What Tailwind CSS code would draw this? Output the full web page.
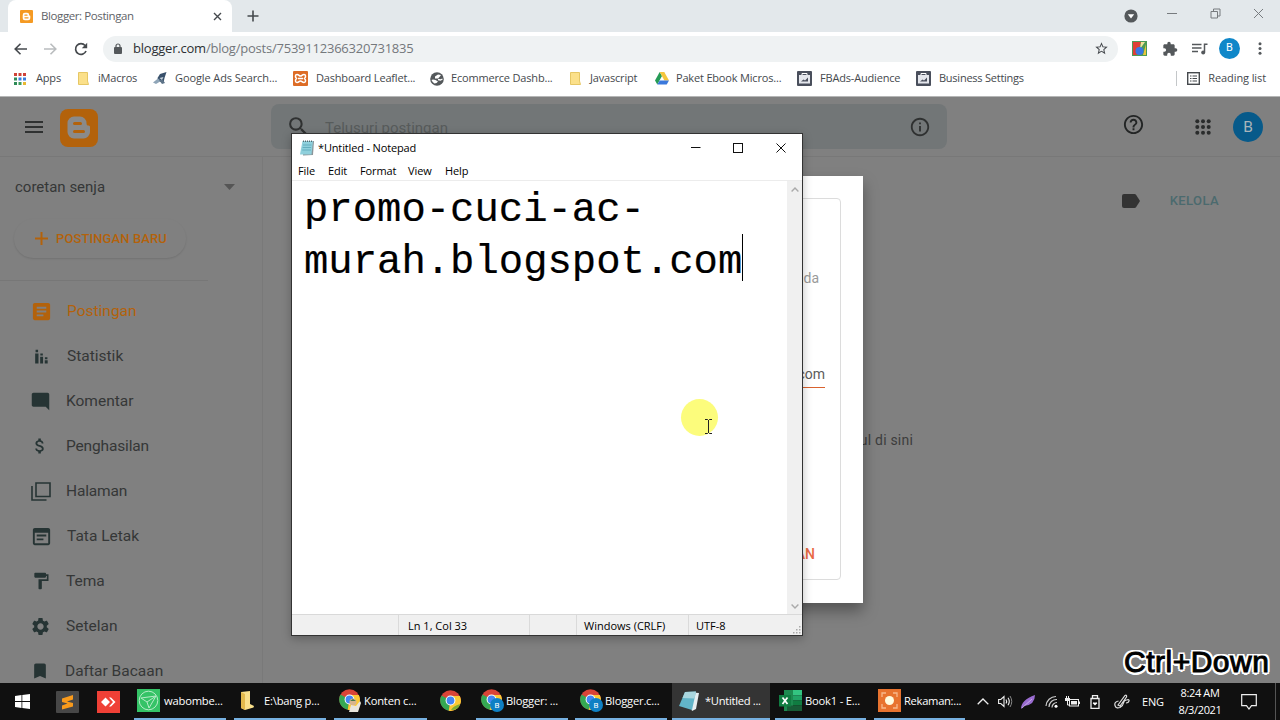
<!DOCTYPE html>
<html lang="id">
<head>
    <meta charset="UTF-8">
    <meta name="viewport" content="width=device-width, initial-scale=1.0">
    <title>Blogger: Postingan</title>
    <script src="https://cdn.jsdelivr.net/npm/@tailwindcss/browser@4"></script>
</head>
<body class="bg-[#808080]">
<div class="relative w-[1280px] h-[720px] overflow-hidden flex flex-col font-['Open_Sans',sans-serif] text-xs text-[#45494d]">

    <!-- Tab strip -->
    <div class="h-8 shrink-0 bg-[#e3e8eb] flex pl-2">
        <div class="w-[224px] h-full bg-white rounded-t-lg flex items-center pl-3">
            <svg class="w-[13px] h-[13px] shrink-0" viewBox="0 0 24 24"><rect width="24" height="24" rx="2" fill="#f59a23"/><path d="M9 5h4a4 4 0 0 1 4 4c0 1 .5 1.500 1.500 1.500S19 11 19 12v3a4 4 0 0 1-4 4H9a4 4 0 0 1-4-4V9a4 4 0 0 1 4-4z" fill="#fff"/><path d="M9 9.500h4M9 14.500h6" stroke="#f59a23" stroke-width="2" stroke-linecap="round"/></svg>
            <span class="ml-2 w-[172px] text-[11.5px] tracking-[-0.4px] text-[#5f6368]">Blogger: Postingan</span>
            <svg class="w-[9px] h-[9px] shrink-0" viewBox="0 0 9 9"><path d="M1 1l7 7M8 1L1 8" stroke="#45494d" stroke-width="1.400"/></svg>
        </div>
        <svg class="ml-[15px] mt-[10px] w-3 h-3" viewBox="0 0 12 12"><path d="M6 .5v11M.5 6h11" stroke="#45494d" stroke-width="1.600"/></svg>
        <div class="ml-auto flex">
            <svg class="mt-[9px] mr-[29px] w-[14px] h-[14px]" viewBox="0 0 14 14"><circle cx="7" cy="7" r="6.600" fill="#54585b"/><path d="M3.800 5.200h6.400L7 9.500z" fill="#fff"/></svg>
            <svg class="mt-[9px] mr-[33px] w-[10px] h-[10px]" viewBox="0 0 10 10"><path d="M0 4.500h10" stroke="#777b7e"/></svg>
            <svg class="mt-2 mr-[32px] w-[11px] h-[11px]" viewBox="0 0 11 11"><path d="M1 3.500h6.500V10H1zM3.500 3.500V1H10v7H7.500" fill="none" stroke="#777b7e"/></svg>
            <svg class="mt-2 mr-4 w-[11px] h-[11px]" viewBox="0 0 11 11"><path d="M1 1l9 9M10 1l-9 9" stroke="#777b7e"/></svg>
        </div>
    </div>

    <!-- Address bar -->
    <div class="h-[33px] shrink-0 bg-white flex items-center">
        <svg class="ml-[14px] w-[13px] h-3" viewBox="0 0 13 12"><path d="M13 6H1.500M6.500 .8L1.200 6l5.300 5.200" fill="none" stroke="#45494d" stroke-width="1.600"/></svg>
        <svg class="ml-[17px] w-[13px] h-3" viewBox="0 0 13 12"><path d="M0 6h11.500M6.500 .8L11.800 6l-5.300 5.200" fill="none" stroke="#b9bcbe" stroke-width="1.600"/></svg>
        <svg class="ml-[17px] w-[14px] h-[14px]" viewBox="0 0 14 14"><path d="M12 9a5.400 5.400 0 1 1-.9-5.500" fill="none" stroke="#45494d" stroke-width="1.700"/><path d="M13.200 .8v5.400H7.800z" fill="#45494d"/></svg>
        <div class="ml-[15px] w-[1015px] h-[26px] rounded-full bg-[#eff2f3] flex items-center">
            <svg class="ml-[11px] w-2 h-[11px]" viewBox="0 0 8 11"><path d="M2 5V3a2 2 0 0 1 4 0v2" fill="none" stroke="#54585b" stroke-width="1.200"/><rect y="4" width="8" height="7" rx="1" fill="#54585b"/></svg>
            <span class="ml-[11px] text-[13px] tracking-[-0.22px] text-[#74787c]"><span class="text-[#2d3033]">blogger.com</span>/blog/posts/7539112366320731835</span>
            <svg class="ml-auto mr-[9px] w-[15px] h-[15px]" viewBox="0 0 24 24"><path fill="#45494d" d="M22 9.240l-7.190-.62L12 2 9.190 8.630 2 9.240l5.460 4.730L5.820 21 12 17.270 18.180 21l-1.630-7.030L22 9.240zM12 15.400l-3.760 2.270 1-4.280-3.320-2.880 4.380-.38L12 6.100l1.710 4.040 4.380.38-3.320 2.880 1 4.280L12 15.400z"/></svg>
        </div>
        <svg class="ml-[14px] w-[15px] h-[15px]" viewBox="0 0 15 15"><path fill="#4c9a56" d="M0 0h15v15H0z"/><path fill="#df3e35" d="M1 1h8L5 14H1z"/><path fill="#efe39a" d="M9 1h4L8 8z"/><path fill="#e8c63c" d="M14 3v11h-3z"/><circle cx="7.500" cy="10" r="4" fill="#3a76e3"/></svg>
        <svg class="ml-[15px] w-[16px] h-[16px]" viewBox="0 0 24 24"><path fill="#54585b" d="M20.500 11H19V7c0-1.100-.9-2-2-2h-4V3.500a2.500 2.500 0 0 0-5 0V5H4c-1.100 0-2 .9-2 2v3.800h1.500a2.700 2.700 0 0 1 0 5.400H2V20c0 1.100.9 2 2 2h3.800v-1.500a2.700 2.700 0 0 1 5.400 0V22H17c1.100 0 2-.9 2-2v-4h1.500a2.500 2.500 0 0 0 0-5z"/></svg>
        <svg class="ml-[14px] w-[16px] h-3" viewBox="0 0 16 12"><path d="M0 1.500h9.500M0 5h9.500M0 8.500h6" stroke="#54585b" stroke-width="1.500"/><path d="M15.500 1.200h-3V9" fill="none" stroke="#54585b" stroke-width="1.500"/><circle cx="11.200" cy="9.400" r="2" fill="#54585b"/></svg>
        <div class="ml-[11px] w-[21px] h-[21px] rounded-full bg-[#0f87c9] text-white text-[11px] font-['Roboto',sans-serif] flex items-center justify-center">B</div>
        <svg class="ml-[18px] w-1 h-[13px]" viewBox="0 0 4 13"><g fill="#54585b"><circle cx="2" cy="1.800" r="1.500"/><circle cx="2" cy="6.500" r="1.500"/><circle cx="2" cy="11.200" r="1.500"/></g></svg>
    </div>

    <!-- Bookmarks -->
    <div class="h-8 shrink-0 bg-white border-b border-[#b5b6b6] pb-1 flex items-center pl-[14px] text-[11px] tracking-[-0.18px] whitespace-nowrap">
        <div class="w-16 flex items-center">
            <svg class="mr-[10px] w-3 h-3" viewBox="0 0 12 12"><path fill="#cf4238" d="M0 0h3v3H0zM4.500 0h3v3h-3zM9 0h3v3H9z"/><path fill="#2e8b57" d="M0 4.500h3v3H0zM0 9h3v3H0z"/><path fill="#3b7ddd" d="M4.500 4.500h3v3h-3zM9 4.500h3v3H9z"/><path fill="#3b9a5a" d="M4.500 9h3v3h-3z"/><path fill="#e8b832" d="M9 9h3v3H9z"/></svg>
            <span>Apps</span>
        </div>
        <div class="w-[75px] flex items-center">
            <svg class="mr-[9px] w-[11px] h-[13px]" viewBox="0 0 11 13"><path fill="#fbe08a" stroke="#e6c765" d="M.5 .5h9v8.500l1 3.500H.5z"/></svg>
            <span>iMacros</span>
        </div>
        <div class="w-[140px] flex items-center">
            <svg class="mr-2 w-[14px] h-[13px]" viewBox="0 0 14 13"><path d="M13.500 0L7 2 4.500 6l1 3 5 2 1-5z" fill="#38506b"/><path d="M0 10.500l5-4 3 2.500-5 3z" fill="#8fa5b8"/><path d="M6 8l3 4 3-1-2-3z" fill="#5d7388"/><path d="M6.500 6l4-1-1.500 3z" fill="#c8d4de"/></svg>
            <span class="tracking-[-0.1px]">Google Ads Search...</span>
        </div>
        <div class="w-[137px] flex items-center">
            <svg class="mr-2 w-[15px] h-[15px]" viewBox="0 0 15 15"><rect width="15" height="15" rx="1" fill="#dd6c26"/><path d="M4 3.500c2 0 2 1.500 3.500 1.500S9 3.500 11 3.500s2 2.500.5 4c1.500 1.500 1.500 4-.5 4S9 10 7.500 10 6 11.500 4 11.500s-2-2.500-.5-4C2 6 2 3.500 4 3.500z" fill="none" stroke="#fff" stroke-width="1.500"/><path d="M5 7.500h5" stroke="#fff" stroke-width="1.500"/></svg>
            <span>Dashboard Leaflet...</span>
        </div>
        <div class="w-[140px] flex items-center">
            <svg class="mr-[7px] w-[14px] h-[14px]" viewBox="0 0 14 14"><circle cx="7" cy="7" r="6.800" fill="#54585b"/><path d="M1.500 8q1 2.500 3 3.500l2-.5L8 9.500 5.500 8 3 7.500zM5 4.500L8 2.500l3 .5-1.500 2L8 6.500H5z" fill="#fff"/><path d="M8 7.500l2.500.5 2-1" stroke="#fff" stroke-width="1.300" fill="none"/></svg>
            <span>Ecommerce Dashb...</span>
        </div>
        <div class="w-[85px] flex items-center">
            <svg class="mr-[9px] w-[11px] h-[13px]" viewBox="0 0 11 13"><path fill="#fbe08a" stroke="#e6c765" d="M.5 .5h9v8.500l1 3.500H.5z"/></svg>
            <span>Javascript</span>
        </div>
        <div class="w-[142px] flex items-center">
            <svg class="mr-[7px] w-[14px] h-[13px]" viewBox="0 0 14 13"><path fill="#259b56" d="M4.700 0L0 8.500 2.300 12.500 7 4z"/><path fill="#f4c63d" d="M4.700 0h4.600L14 8.500H9.400z"/><path fill="#3b78dc" d="M4.700 8.500H14l-2.300 4H2.300z"/></svg>
            <span>Paket Ebook Micros...</span>
        </div>
        <div class="w-[119px] flex items-center">
            <svg class="mr-2 w-[15px] h-[15px]" viewBox="0 0 15 15"><rect width="15" height="15" rx="1" fill="#4a4f5c"/><path d="M5 4V2.500h5V4" fill="none" stroke="#fff"/><rect x="2" y="4" width="11" height="8.500" fill="#e4e6ec"/><path d="M4 10.500l2.500-2 1.500 1 3-3v4z" fill="#4a4f5c"/></svg>
            <span>FBAds-Audience</span>
        </div>
        <div class="flex items-center">
            <svg class="mr-2 w-[15px] h-[15px]" viewBox="0 0 15 15"><rect width="15" height="15" rx="1" fill="#4a4f5c"/><path d="M5 4V2.500h5V4" fill="none" stroke="#fff"/><rect x="2" y="4" width="11" height="8.500" fill="#e4e6ec"/><path d="M4 10.500l2.500-2 1.500 1 3-3v4z" fill="#4a4f5c"/></svg>
            <span class="tracking-[-0.24px]">Business Settings</span>
        </div>
        <div class="ml-auto mr-[14px] flex items-center border-l border-[#c4c7c9] pl-[10px]">
            <svg class="mr-2 w-[13px] h-[13px]" viewBox="0 0 13 13"><rect x=".7" y=".7" width="11.600" height="11.600" fill="none" stroke="#45494d" stroke-width="1.400"/><path d="M3 4h1.500M3 6.500h1.500M3 9h1.500M5.500 4H10M5.500 6.500H10M5.500 9H10" stroke="#45494d" stroke-width="1.200"/></svg>
            <span class="tracking-[-0.1px]">Reading list</span>
        </div>
    </div>

    <!-- Blogger page, dimmed by the open dialog -->
    <div class="h-[586px] shrink-0 bg-[#808080] flex flex-col font-['Roboto',sans-serif] text-[15.5px] leading-6 text-[#353737]">
        <div class="h-[60px] shrink-0 border-b border-[#787878] flex items-center">
            <svg class="ml-[25px] w-[18px] h-[12px]" viewBox="0 0 18 12"><path d="M0 1h18M0 6h18M0 11h18" stroke="#2f3131" stroke-width="1.800"/></svg>
            <svg class="ml-[17px] mt-[3px] w-[38px] h-[38px]" viewBox="0 0 38 38"><rect width="38" height="38" rx="8" fill="#b3620b"/><path d="M14 7.500h6a6.500 6.500 0 0 1 6.500 6.500c0 2 .6 2.500 2 2.600 1.200.1 1.500.7 1.500 1.700V23a6.500 6.500 0 0 1-6.500 6.500H14A6.500 6.500 0 0 1 7.500 23v-9A6.500 6.500 0 0 1 14 7.500z" fill="#8a8a8a"/><path d="M14.500 14.500h6M14.500 22.500h9" stroke="#b3620b" stroke-width="3" stroke-linecap="round"/></svg>
            <div class="ml-[173px] w-[676px] h-[45px] rounded-lg bg-[#727677] flex items-center">
                <svg class="ml-[15px] w-[25px] h-[25px]" viewBox="0 0 24 24"><path fill="#2f3131" d="M15.500 14h-.79l-.28-.27A6.471 6.471 0 0 0 16 9.500 6.500 6.500 0 1 0 9.500 16c1.610 0 3.090-.59 4.230-1.570l.27.280v.79l5 4.990L20.490 19l-4.990-5zm-6 0C7.010 14 5 11.990 5 9.500S7.010 5 9.500 5 14 7.010 14 9.500 11.990 14 9.500 14z"/></svg>
                <span class="ml-[14px] mt-0.5 text-[15px] text-[#575b5b]">Telusuri postingan</span>
                <svg class="ml-auto mr-4 w-[22px] h-[22px]" viewBox="0 0 24 24"><path fill="#2f3131" d="M11 7h2v2h-2zm0 4h2v6h-2zm1-9C6.480 2 2 6.480 2 12s4.480 10 10 10 10-4.480 10-10S17.520 2 12 2zm0 18c-4.410 0-8-3.590-8-8s3.590-8 8-8 8 3.590 8 8-3.590 8-8 8z"/></svg>
            </div>
            <svg class="ml-[175px] mb-1 w-[23px] h-[23px]" viewBox="0 0 24 24"><path fill="#232525" d="M11 18h2v-2h-2v2zm1-16C6.480 2 2 6.480 2 12s4.480 10 10 10 10-4.480 10-10S17.520 2 12 2zm0 18c-4.410 0-8-3.590-8-8s3.590-8 8-8 8 3.590 8 8-3.590 8-8 8zm0-14c-2.210 0-4 1.790-4 4h2c0-1.100.9-2 2-2s2 .9 2 2c0 2-3 1.750-3 5h2c0-2.250 3-2.500 3-5 0-2.210-1.790-4-4-4z"/></svg>
            <svg class="ml-[50px] w-4 h-4" viewBox="0 0 16 16"><g fill="#2a2c2c"><circle cx="2.300" cy="2.300" r="2"/><circle cx="8" cy="2.300" r="2"/><circle cx="13.700" cy="2.300" r="2"/><circle cx="2.300" cy="8" r="2"/><circle cx="8" cy="8" r="2"/><circle cx="13.700" cy="8" r="2"/><circle cx="2.300" cy="13.700" r="2"/><circle cx="8" cy="13.700" r="2"/><circle cx="13.700" cy="13.700" r="2"/></g></svg>
            <div class="ml-[22px] w-[30px] h-[30px] rounded-full bg-[#075a8a] text-[#a9b4ba] flex items-center justify-center">B</div>
        </div>

        <div class="flex-1 flex overflow-hidden">
            <!-- Sidebar -->
            <div class="w-[263px] shrink-0 border-r border-[#797979] flex flex-col">
                <div class="h-[58px] shrink-0 flex items-center justify-between pl-[15px] pr-7">
                    <span class="text-[15px] mt-0.5">coretan senja</span>
                    <svg class="w-[11px] h-[6px] -mr-px mt-px" viewBox="0 0 11 6"><path d="M0 0h11L5.500 6z" fill="#555"/></svg>
                </div>
                <div class="ml-[14px] mt-1 w-[172px] h-[39px] shrink-0 rounded-full shadow-[0_1px_2px_rgba(0,0,0,0.12)] flex items-center pl-[21px] text-[#b3620b] text-[13px] font-medium">
                    <svg class="w-[13px] h-[13px] mr-[8px]" viewBox="0 0 13 13"><path d="M6.500 0v13M0 6.500h13" stroke="#b3620b" stroke-width="2"/></svg>
                    <span class="tracking-[0.1px]">POSTINGAN BARU</span>
                </div>
                <div class="mt-[22px] w-[208px] border-b border-[#777]"></div>
                <div class="mt-[7px] flex flex-col [&>div]:h-[45px] [&>div]:shrink-0 [&>div]:flex [&>div]:items-center [&>div]:pl-[30px] [&>div]:pt-px">
                    <div class="text-[#b3620b]">
                        <svg class="w-[23px] h-[23px] mr-[14px]" viewBox="0 0 24 24"><path fill="#b3620b" d="M19 3H5c-1.100 0-2 .9-2 2v14c0 1.100.9 2 2 2h14c1.100 0 2-.9 2-2V5c0-1.100-.9-2-2-2zm-5 14H7v-2h7v2zm3-4H7v-2h10v2zm0-4H7V7h10v2z"/></svg>Postingan
                    </div>
                    <div>
                        <svg class="w-[20px] h-[20px] mr-[16px] ml-px" viewBox="0 0 24 24"><path fill="#263434" d="M5 9h4v12H5zM5.500 4.500h3v3h-3zM11 13h3.500v8H11zM11.200 9h3v2.500h-3zM16.500 17H20v4h-3.500zM16.700 13.500h3V16h-3z"/></svg>Statistik
                    </div>
                    <div>
                        <svg class="w-[21px] h-[21px] mr-[15px]" viewBox="0 0 24 24"><path fill="#263434" d="M21.990 4c0-1.100-.89-2-1.990-2H4c-1.100 0-2 .9-2 2v12c0 1.100.9 2 2 2h14l4 4-.01-18z"/></svg>Komentar
                    </div>
                    <div>
                        <svg class="w-[20px] h-[20px] mr-[16px]" viewBox="0 0 24 24"><path fill="#263434" d="M11.800 10.900c-2.270-.59-3-1.200-3-2.150 0-1.090 1.010-1.850 2.700-1.850 1.780 0 2.440.85 2.500 2.100h2.210c-.07-1.720-1.120-3.300-3.210-3.810V3h-3v2.160c-1.940.42-3.500 1.680-3.500 3.610 0 2.310 1.910 3.460 4.700 4.130 2.500.6 3 1.480 3 2.410 0 .69-.49 1.790-2.700 1.790-2.060 0-2.870-.92-2.980-2.100h-2.200c.12 2.190 1.760 3.420 3.680 3.830V21h3v-2.150c1.950-.37 3.500-1.500 3.500-3.550 0-2.840-2.430-3.810-4.700-4.400z"/></svg><span class="tracking-[-0.15px]">Penghasilan</span>
                    </div>
                    <div>
                        <svg class="w-[20px] h-[19px] mr-[15px] ml-px" viewBox="0 0 20 19"><path d="M5 1h14v13.500H5zM1 4v14h14.500" fill="none" stroke="#263434" stroke-width="1.600"/></svg><span class="tracking-[-0.15px]">Halaman</span>
                    </div>
                    <div>
                        <svg class="w-[23px] h-[23px] mr-[14px]" viewBox="0 0 24 24"><path fill="#263434" d="M19 3H5c-1.100 0-2 .9-2 2v14c0 1.100.9 2 2 2h14c1.100 0 2-.9 2-2V5c0-1.100-.9-2-2-2zm0 16H5V8h14v11zM7 10h10v2H7zm0 4h7v2H7z"/></svg>Tata Letak
                    </div>
                    <div>
                        <svg class="w-[20px] h-[20px] mr-[15px] ml-px" viewBox="0 0 24 24"><path fill="#263434" d="M18 4V3c0-.55-.45-1-1-1H5c-.55 0-1 .45-1 1v4c0 .55.45 1 1 1h12c.55 0 1-.45 1-1V6h1v4H9v11c0 .55.45 1 1 1h2c.55 0 1-.45 1-1v-9h8V4h-3z"/></svg>Tema
                    </div>
                    <div>
                        <svg class="w-[21px] h-[21px] mr-[15px]" viewBox="0 0 24 24"><path fill="#263434" d="M19.140 12.940c.04-.3.06-.61.06-.94 0-.32-.02-.64-.07-.94l2.030-1.580c.18-.14.23-.41.12-.61l-1.920-3.320c-.12-.22-.37-.29-.59-.22l-2.390.96c-.5-.38-1.030-.7-1.620-.94l-.36-2.540c-.04-.24-.24-.41-.48-.41h-3.840c-.24 0-.43.17-.47.41l-.36 2.540c-.59.24-1.130.57-1.620.94l-2.390-.96c-.22-.08-.47 0-.59.22L2.740 8.870c-.12.21-.08.47.12.61l2.030 1.580c-.05.3-.09.63-.09.94s.02.64.07.94l-2.030 1.580c-.18.14-.23.41-.12.61l1.920 3.320c.12.22.37.29.59.22l2.390-.96c.5.38 1.030.7 1.620.94l.36 2.540c.05.24.24.41.48.41h3.840c.24 0 .44-.17.47-.41l.36-2.540c.59-.24 1.130-.56 1.620-.94l2.390.96c.22.08.47 0 .59-.22l1.920-3.320c.12-.22.07-.47-.12-.61l-2.010-1.580zM12 15.600c-1.980 0-3.600-1.620-3.600-3.600s1.620-3.600 3.600-3.600 3.600 1.620 3.600 3.600-1.620 3.600-3.600 3.600z"/></svg>Setelan
                    </div>
                    <div>
                        <svg class="w-[20px] h-[20px] mr-[15px]" viewBox="0 0 24 24"><path fill="#263434" d="M17 3H7c-1.100 0-1.990.9-1.990 2L5 21l7-3 7 3V5c0-1.100-.9-2-2-2z"/></svg>Daftar Bacaan
                    </div>
                </div>
            </div>

            <!-- Post list -->
            <div class="flex-1 flex flex-col">
                <div class="h-[88px] flex items-center justify-end pr-[61px]">
                    <svg class="w-[18px] h-[14px] mr-[30px]" viewBox="0 0 18 14"><path d="M2 0h10.500q1 0 1.700 1L18 7l-3.800 6q-.7 1-1.700 1H2q-2 0-2-2V2q0-2 2-2z" fill="#333"/></svg>
                    <span class="text-[13px] font-medium tracking-[0.4px] text-[#4b6a6e]">KELOLA</span>
                </div>
                <p class="mt-[184px] pr-[367px] text-right text-sm leading-[22px] text-[#3d3d3d] tracking-[0.2px]">ul di sini</p>
            </div>
        </div>
    </div>

    <!-- Taskbar -->
    <div class="h-[37px] shrink-0 bg-[#101010] text-[11.2px] leading-[18px] text-white flex items-stretch whitespace-nowrap tracking-[-0.2px]">
        <div class="w-[134px] flex items-center shrink-0">
            <svg class="ml-[15px] w-[15px] h-[15px]" viewBox="0 0 15 15"><path fill="#fff" d="M0 2l6.500-.9v6H0zM7.300 1L15 0v7.100H7.300zM0 7.900h6.500v6L0 13zM7.300 7.900H15V15l-7.700-1z"/></svg>
            <svg class="ml-[26px] w-[23px] h-[22px]" viewBox="0 0 23 22"><rect width="23" height="22" rx="1" fill="#474747"/><path d="M17 4v4.500L11 10.500l6 1.500v3.500L6 18.500V14.500l5.500-2L6 11V7.500z" fill="#f89a1c"/></svg>
            <svg class="ml-[18px] w-[23px] h-[22px]" viewBox="0 0 23 22"><rect width="23" height="22" fill="#ef4036"/><path fill="#fff" d="M8.500 6.500L13 11l-4.500 4.500L4 11zM12 6.500h2L18.500 11 14 15.500h-2l4-4.500z"/></svg>
        </div>
        <div class="w-[92px] mr-2 shrink-0 border-b-2 border-[#76b0e0] flex items-center pl-[3px]">
            <svg class="mr-1 w-[23px] h-[23px]" viewBox="0 0 23 23"><rect width="23" height="23" fill="#35c367"/><circle cx="11.500" cy="11.500" r="9.300" fill="none" stroke="#b5ecc8"/><path d="M4 9l15-2-7 12-2-6zM10 13l9-6" fill="none" stroke="#b5ecc8"/></svg>
            <span>wabombe...</span>
        </div>
        <div class="w-[92px] mr-2 shrink-0 border-b-2 border-[#76b0e0] flex items-center pl-[7px]">
            <svg class="mr-[10px] w-[13px] h-[19px]" viewBox="0 0 13 19"><path fill="#fae08b" d="M0 1l9-1v13l4 2-.5 1.500L4 19l-4-2z"/><path fill="#e3b94c" d="M0 1l4 2v16l-4-2z"/></svg>
            <span>E:\bang p...</span>
        </div>
        <div class="w-[93px] mr-[13px] shrink-0 border-b-2 border-[#76b0e0] flex items-center pl-[5px]">
            <svg class="mr-[2px] w-[23px] h-[23px]" viewBox="0 0 23 23"><use href="#chrome"/><circle cx="14" cy="13" r="3.500" fill="#d8b48c"/><path d="M10 23l2-7 5 1 4-5 1 2-3 9z" fill="#e9e5dc"/><path d="M11 12l3-2 3 2z" fill="#3f7a48"/></svg>
            <span>Konten c...</span>
        </div>
        <div class="w-[36px] shrink-0 flex items-center">
            <svg class="w-[23px] h-[23px]" viewBox="0 0 23 23">
                <g id="chrome"><circle cx="10.500" cy="10.500" r="10.300" fill="#da4437"/><path d="M10.500 10.500L1.500 5.400a10.300 10.300 0 0 0 7.500 15.300z" fill="#35a853"/><path d="M10.500 10.500L8.700 20.700A10.300 10.300 0 0 0 19.800 6h-9.300z" fill="#fbc934"/><circle cx="10.500" cy="10.500" r="4.900" fill="#fff"/><circle cx="10.500" cy="10.500" r="3.900" fill="#4486f3"/></g>
                <path d="M11 20q2-4 9-6-1 6-9 6z" fill="#7fae33"/>
            </svg>
        </div>
        <div class="w-[92px] mr-[7px] shrink-0 border-b-2 border-[#76b0e0] flex items-center pl-[5px]">
            <svg class="mr-[2px] w-[23px] h-[23px]" viewBox="0 0 23 23"><use href="#chrome"/><circle cx="16" cy="16" r="7" fill="#0f80c4"/><text x="16" y="19" text-anchor="middle" font-family="Roboto" font-size="8" fill="#fff">B</text></svg>
            <span>Blogger: ...</span>
        </div>
        <div class="w-[92px] mr-[5px] shrink-0 border-b-2 border-[#76b0e0] flex items-center pl-[5px]">
            <svg class="mr-[2px] w-[23px] h-[23px]" viewBox="0 0 23 23"><use href="#chrome"/><circle cx="16" cy="16" r="7" fill="#0f80c4"/><text x="16" y="19" text-anchor="middle" font-family="Roboto" font-size="8" fill="#fff">B</text></svg>
            <span>Blogger.c...</span>
        </div>
        <div class="w-[98px] mr-[5px] shrink-0 border-b-2 border-[#76b0e0] bg-[#343434] flex items-center pl-[7px]">
            <svg class="mr-[5px] w-[21px] h-[20px]" viewBox="0 0 21 20"><path d="M7 1l13 1-3 16-4 2z" fill="#e7eef0"/><path d="M6 1l11-.5L13 19 0 15z" fill="#62b4c8"/><path d="M6 1l11-.5-1.500 7L3.500 7z" fill="#a9d6de"/></svg>
            <span class="tracking-[-0.3px]">*Untitled ...</span>
        </div>
        <div class="w-[91px] mr-2 shrink-0 border-b-2 border-[#76b0e0] flex items-center pl-1">
            <svg class="mr-[3px] w-[23px] h-[21px]" viewBox="0 0 23 21"><path fill="#1d8a50" d="M5 0h9v21H5z"/><path fill="#33c481" d="M14 0h9v5.500h-9z"/><path fill="#21a366" d="M14 5.500h9v5h-9z"/><path fill="#107c41" d="M14 10.500h9v5h-9z"/><path fill="#185c37" d="M8 15.500h15V21H8z"/><rect y="5" width="12" height="11.500" fill="#107c41"/><path d="M3.500 7.500l5 6.500M8.500 7.500l-5 6.500" stroke="#fff" stroke-width="1.700"/></svg>
            <span>Book1 - E...</span>
        </div>
        <div class="w-[91px] shrink-0 border-b-2 border-[#76b0e0] flex items-center pl-1">
            <svg class="mr-[3px] w-[23px] h-[23px]" viewBox="0 0 23 23"><rect width="23" height="23" fill="#e8732f"/><circle cx="11.500" cy="11.500" r="4.500" fill="#fffbe0"/><path d="M4 8V4h4M15 4h4v4M19 15v4h-4M8 19H4v-4" fill="none" stroke="#f7b98c" stroke-width="1.300"/></svg>
            <span class="tracking-[-0.3px]">Rekaman:...</span>
        </div>

        <!-- Tray -->
        <div class="flex items-center ml-3">
            <svg class="w-[12px] h-[7px]" viewBox="0 0 12 7"><path d="M.7 6.300L6 1l5.300 5.300" fill="none" stroke="#eee" stroke-width="1.300"/></svg>
            <svg class="ml-[9px] w-[15px] h-[13px]" viewBox="0 0 15 13"><path d="M.6 4.500h2.200L6 1.500v10l-3.200-3H.6zM8 4.500q1.300 2 0 4M10 2.800q2.500 3.700 0 7.400" fill="none" stroke="#eee" stroke-width="1.100"/><path d="M12 1q3.500 5.500 0 11" fill="none" stroke="#888"/></svg>
            <svg class="ml-2 w-[14px] h-[14px]" viewBox="0 0 14 14"><path d="M0 14Q0 5 14 0q0 10-11 11z" fill="#9a6cd0"/><path d="M1 13L11 4" stroke="#d6bdf0" stroke-width=".8"/></svg>
            <svg class="ml-[10px] w-[14px] h-[13px]" viewBox="0 0 14 13"><path d="M1 11A10 10 0 0 1 11 1.500M4 12a7.500 7.500 0 0 1 8-7.500M7 12.500A5 5 0 0 1 12 7.500" fill="none" stroke="#ccc" stroke-width="1.200"/><circle cx="11" cy="11.300" r="1.500" fill="#fff"/></svg>
            <svg class="ml-[6px] w-[15px] h-[12px]" viewBox="0 0 15 12"><rect x="4.500" y="3.500" width="9" height="6.500" fill="none" stroke="#eee"/><path d="M6 5h6v3.500H6zM14 5.500h1V8h-1zM0 2h5v3H0z" fill="#eee"/><path d="M1.500 0v2M3.500 0v2M2.500 5v4h2" fill="none" stroke="#eee"/></svg>
            <svg class="ml-[10px] w-[10px] h-[14px]" viewBox="0 0 10 14"><path d="M1 3.500h8v9.800H1zM2.500 3V.7h5V3" fill="none" stroke="#eee" stroke-width="1.300"/><path d="M5 10.500L2.700 8.200q.8-1.700 2.300-.5 1.500-1.200 2.300.5z" fill="#fff"/></svg>
            <svg class="ml-[14px] w-4 h-[15px]" viewBox="0 0 16 15"><path d="M4 11L11 1.500q2-1 1.500 1.500L6 12zM4.500 7Q0 8 1 11.500T6 13.500q3-1.500 3.500-4.500t3-3q3-1 2.500 1t-3 2" fill="none" stroke="#ddd" stroke-width="1.200"/></svg>
            <span class="ml-3 w-[23px] text-[11px] tracking-[-0.2px]">ENG</span>
            <div class="ml-[8px] w-[54px] text-center text-[11px] leading-[16.5px] tracking-[-0.35px]">8:24 AM<br>8/3/2021</div>
            <svg class="ml-[14px] w-4 h-4" viewBox="0 0 16 16"><path d="M.7 .7h14.600v11H10.500L8 15l-2.500-3.300H.7z" fill="none" stroke="#eee" stroke-width="1.200"/></svg>
        </div>
        <div class="ml-auto mr-1 border-l border-[#555]"></div>
    </div>

    <!-- Dialog behind Notepad -->
    <div class="absolute left-[417px] top-[176px] w-[446px] h-[427px] bg-white p-[22px] font-['Roboto',sans-serif] text-sm text-right shadow-[0_8px_14px_rgba(0,0,0,0.35)]">
        <div class="h-[382px] border border-[#dcdcdc] rounded-[4px] flex flex-col">
            <p class="mt-[69px] mr-[21px] text-[#9a9a9a]">nda</p>
            <p class="mt-[73px] mr-[15px] pb-[3px] pt-[3px] border-b border-[#d9622f] text-[#5c5c5c]">com</p>
            <p class="mt-[156px] mr-[25px] font-medium text-[#ea6a45]">AN</p>
        </div>
    </div>

    <!-- Notepad window -->
    <div class="absolute left-[291px] top-[133px] w-[512px] h-[503px] bg-white border border-[#333] flex flex-col text-black text-[11px] shadow-[0_3px_9px_rgba(0,0,0,0.25)]">
        <div class="h-7 shrink-0 flex items-center pl-2">
            <svg class="w-[14px] h-4" viewBox="0 0 14 16"><path d="M3 1h11l-1 14-10 .5z" fill="#8b9599"/><path d="M2.500 1H13l-1.500 13.500H0z" fill="#8fd0dc"/><path d="M3 5h8.500M2.600 7.500h8.500M2.300 10H11" stroke="#5aa6b8" stroke-width=".8"/><path d="M3 1.300h10" stroke="#55686e" stroke-width="1.500" stroke-dasharray="1 1"/></svg>
            <span class="ml-1 tracking-[-0.15px]">*Untitled - Notepad</span>
            <svg class="ml-auto w-[10px] h-[10px]" viewBox="0 0 10 10"><path d="M0 4.500h9.500" stroke="#111"/></svg>
            <svg class="ml-8 mb-px w-[10px] h-[10px]" viewBox="0 0 10 10"><rect x=".5" y=".5" width="9" height="9" fill="none" stroke="#111"/></svg>
            <svg class="ml-[33px] mr-4 mb-px w-[10px] h-[10px]" viewBox="0 0 10 10"><path d="M.5 .5l9 9M9.500 .5l-9 9" stroke="#111"/></svg>
        </div>
        <div class="h-[19px] shrink-0 border-b border-[#ececec] flex items-center pl-[6px] pt-px text-[11px] tracking-[-0.1px]">
            <span class="w-[30px]">File</span>
            <span class="w-8">Edit</span>
            <span class="w-12">Format</span>
            <span class="w-[37px]">View</span>
            <span>Help</span>
        </div>
        <div class="flex-1 flex">
            <div class="flex-1 pl-3 pt-[3px] font-['Liberation_Mono',monospace] text-[40.6px] leading-[52px] [-webkit-text-stroke:0.2px_black]">
                promo-cuci-ac-<br>
                <span class="flex items-start h-[52px]">murah.blogspot.com<span class="w-px h-[47px] -mt-[2px] bg-black"></span></span>
            </div>
            <div class="w-[15px] bg-[#f0f0f0] flex flex-col items-center justify-between pt-[6px] pb-[5px]">
                <svg class="w-2 h-[5px]" viewBox="0 0 8 5"><path d="M.6 4.400L4 1l3.400 3.400" fill="none" stroke="#aaa" stroke-width="1.400"/></svg>
                <svg class="w-2 h-[5px]" viewBox="0 0 8 5"><path d="M.6 .6L4 4 7.400 .6" fill="none" stroke="#aaa" stroke-width="1.400"/></svg>
            </div>
        </div>
        <div class="h-[21px] shrink-0 bg-[#f0f0f0] border-t border-[#d9d9d9] flex items-center pl-[106px] text-[11px]">
            <span class="w-[131px] h-full border-l border-[#dadada] pl-[9px] leading-[21px]">Ln 1, Col 33</span>
            <span class="w-[47px] h-full border-l border-[#dadada]"></span>
            <span class="w-[112px] h-full border-l border-[#dadada] pl-[7px] leading-[21px]">Windows (CRLF)</span>
            <span class="h-full border-l border-[#dadada] pl-[7px] leading-[21px]">UTF-8</span>
            <svg class="ml-auto mr-px mt-[9px] w-2 h-2" viewBox="0 0 8 8"><path fill="#aaa" d="M6 0h1.500v1.500H6zM3 3h1.500v1.500H3zM6 3h1.500v1.500H6zM0 6h1.500v1.500H0zM3 6h1.500v1.500H3zM6 6h1.500v1.500H6z"/></svg>
        </div>
    </div>

    <!-- Pointer highlight -->
    <div class="absolute left-[681px] top-[399px] w-[37px] h-[37px] rounded-full bg-[#fcfc7c]"></div>
    <svg class="absolute left-[705px] top-[419px] w-[7px] h-[15px]" viewBox="0 0 7 15"><path d="M0 .5h2.800M4.200 .5H7M0 14.500h2.800M4.200 14.500H7M3.500 1v13" stroke="#222"/></svg>

    <!-- Pressed keys -->
    <div class="absolute left-[1124px] top-[645px] font-['Liberation_Sans',sans-serif] text-[30px] leading-[34px] tracking-[0.5px] text-black [-webkit-text-stroke:1px_black] [text-shadow:2.5px_0_0_#fff,-2.5px_0_0_#fff,0_2.5px_0_#fff,0_-2.5px_0_#fff,2px_2px_0_#fff,-2px_2px_0_#fff,2px_-2px_0_#fff,-2px_-2px_0_#fff]">Ctrl+Down</div>
</div>
</body>
</html>
